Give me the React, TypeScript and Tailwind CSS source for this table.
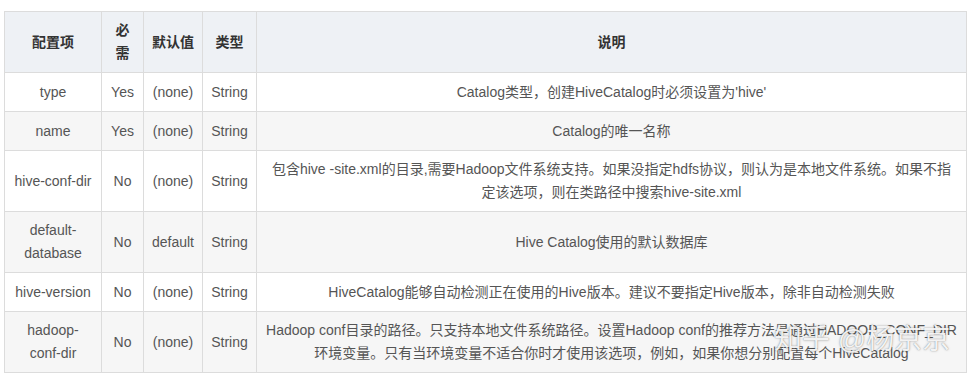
const rows: { key: string[]; req: string; def: string; type: string; desc: string[]; h: number }[] = [
  { key: ["type"], req: "Yes", def: "(none)", type: "String", desc: ["Catalog类型，创建HiveCatalog时必须设置为'hive'"], h: 39 },
  { key: ["name"], req: "Yes", def: "(none)", type: "String", desc: ["Catalog的唯一名称"], h: 39 },
  {
    key: ["hive-conf-dir"],
    req: "No",
    def: "(none)",
    type: "String",
    desc: [
      "包含hive -site.xml的目录,需要Hadoop文件系统支持。如果没指定hdfs协议，则认为是本地文件系统。如果不指",
      "定该选项，则在类路径中搜索hive-site.xml",
    ],
    h: 61,
  },
  { key: ["default-", "database"], req: "No", def: "default", type: "String", desc: ["Hive Catalog使用的默认数据库"], h: 61 },
  { key: ["hive-version"], req: "No", def: "(none)", type: "String", desc: ["HiveCatalog能够自动检测正在使用的Hive版本。建议不要指定Hive版本，除非自动检测失败"], h: 39 },
  {
    key: ["hadoop-", "conf-dir"],
    req: "No",
    def: "(none)",
    type: "String",
    desc: [
      "Hadoop conf目录的路径。只支持本地文件系统路径。设置Hadoop conf的推荐方法是通过HADOOP_CONF_DIR",
      "环境变量。只有当环境变量不适合你时才使用该选项，例如，如果你想分别配置每个HiveCatalog",
    ],
    h: 61,
  },
];

function Lines({ items }: { items: string[] }) {
  return (
    <div className="flex flex-col items-center">
      {items.map((s, i) => (
        <span key={i} className="whitespace-nowrap">
          {s}
        </span>
      ))}
    </div>
  );
}

export default function App() {
  const cell = "border border-[#dcdcdc] text-center align-middle p-0";
  return (
    <div
      className="relative w-[974px] h-[377px] bg-white pt-[11px] pl-[4px] text-[14px] leading-[23px] text-[#555]"
      style={{ fontFamily: '"Liberation Sans", "Noto Sans CJK SC", sans-serif' }}
    >
      <table className="table-fixed border-collapse w-[962px]">
        <colgroup>
          <col className="w-[97px]" />
          <col className="w-[42px]" />
          <col className="w-[59px]" />
          <col className="w-[54px]" />
          <col className="w-[710px]" />
        </colgroup>
        <thead>
          <tr className="h-[61px] bg-[#eef1f5] text-[#333] font-bold">
            <th className={cell}>配置项</th>
            <th className={cell}>
              <div>必</div>
              <div>需</div>
            </th>
            <th className={cell}>默认值</th>
            <th className={cell}>类型</th>
            <th className={cell}>说明</th>
          </tr>
        </thead>
        <tbody>
          {rows.map((r, i) => (
            <tr key={i} className={i % 2 === 1 ? "bg-[#f6f6f6]" : "bg-white"} style={{ height: r.h }}>
              <td className={cell}>
                <Lines items={r.key} />
              </td>
              <td className={cell}>{r.req}</td>
              <td className={cell}>{r.def}</td>
              <td className={cell}>{r.type}</td>
              <td className={cell}>
                <Lines items={r.desc} />
              </td>
            </tr>
          ))}
        </tbody>
      </table>
      {/* zhihu watermark */}
      <div className="pointer-events-none absolute left-[774px] top-[320px] text-[28px] leading-[40px] text-white/90 [text-shadow:0_0_1px_rgba(0,0,0,0.45),0_0_3px_rgba(0,0,0,0.2)] whitespace-nowrap">
        知乎 @杨京京
      </div>
    </div>
  );
}
